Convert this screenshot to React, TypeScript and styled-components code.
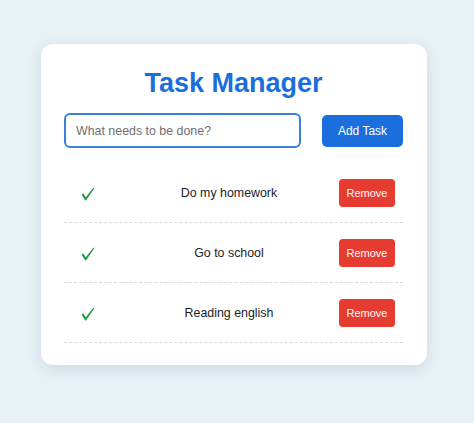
import { FC, useState } from 'react';
import styled, { createGlobalStyle } from 'styled-components';

const GlobalStyle = createGlobalStyle`
  html, body {
    margin: 0;
    padding: 0;
    background: #e7f1f6;
    font-family: 'Liberation Sans', Arial, sans-serif;
  }
`;

const Page = styled.div`
  min-height: 423px;
  padding: 44px 0 0 41px;
  box-sizing: border-box;
`;

const Card = styled.div`
  width: 386px;
  box-sizing: border-box;
  padding: 23px 24px 22px 23px;
  background: #ffffff;
  border-radius: 12px;
  box-shadow: 0 4px 14px rgba(40, 80, 110, 0.14);
`;

const Title = styled.h1`
  margin: 0;
  text-align: center;
  font-size: 27px;
  line-height: 32px;
  font-weight: 700;
  color: #1b6fdd;
`;

const Form = styled.form`
  display: flex;
  align-items: center;
  gap: 21px;
  margin-top: 14px;
`;

const Input = styled.input`
  width: 237px;
  height: 35px;
  box-sizing: border-box;
  padding: 0 10px;
  border: 2px solid #3b7fd8;
  border-radius: 6px;
  font-family: inherit;
  font-size: 12.4px;
  color: #222;
  outline: none;
  &::placeholder {
    color: #6f6f6f;
  }
`;

const AddButton = styled.button`
  width: 81px;
  height: 32px;
  border: none;
  border-radius: 5px;
  background: #1b6fdd;
  color: #ffffff;
  font-family: inherit;
  font-size: 12px;
  cursor: pointer;
`;

const List = styled.ul`
  list-style: none;
  margin: 15px 0 0;
  padding: 0;
`;

const Row = styled.li`
  display: flex;
  align-items: center;
  height: 60px;
  box-sizing: border-box;
  padding-right: 8px;
  border-bottom: 1px dashed #d6d9dc;
`;

const Check = styled.span`
  width: 55px;
  box-sizing: border-box;
  display: flex;
  padding: 3px 0 0 17px;
  color: #2a9a4c;
`;

const Label = styled.span`
  flex: 1;
  text-align: center;
  font-size: 12.4px;
  color: #1d1d1d;
`;

const RemoveButton = styled.button`
  width: 56px;
  height: 28px;
  border: none;
  border-radius: 4px;
  background: #e53b30;
  color: #ffffff;
  font-family: inherit;
  font-size: 11px;
  cursor: pointer;
`;

// tick with a heavier short arm, like the ✓ glyph
const CheckIcon: FC = () => (
  <svg width='14' height='14' viewBox='0 0 14 14'>
    <path
      d='M0.6 7.4 L2.4 6.4 L4.7 10.2 L12.6 0.6 L13.4 1.2 L5 13.4 L4.2 13.4 Z'
      fill='currentColor'
    />
  </svg>
);

const initialTasks = ['Do my homework', 'Go to school', 'Reading english'];

const App: FC = () => {
  const [tasks, setTasks] = useState<string[]>(initialTasks);
  const [text, setText] = useState('');

  const addTask = (e: React.FormEvent) => {
    e.preventDefault();
    if (!text.trim()) return;
    setTasks([...tasks, text.trim()]);
    setText('');
  };

  return (
    <Page>
      <GlobalStyle />
      <Card>
        <Title>Task Manager</Title>
        <Form onSubmit={addTask}>
          <Input
            placeholder='What needs to be done?'
            value={text}
            onChange={(e) => setText(e.target.value)}
          />
          <AddButton type='submit'>Add Task</AddButton>
        </Form>
        <List>
          {tasks.map((task, i) => (
            <Row key={i}>
              <Check>
                <CheckIcon />
              </Check>
              <Label>{task}</Label>
              <RemoveButton onClick={() => setTasks(tasks.filter((_, j) => j !== i))}>
                Remove
              </RemoveButton>
            </Row>
          ))}
        </List>
      </Card>
    </Page>
  );
};

export default App;
